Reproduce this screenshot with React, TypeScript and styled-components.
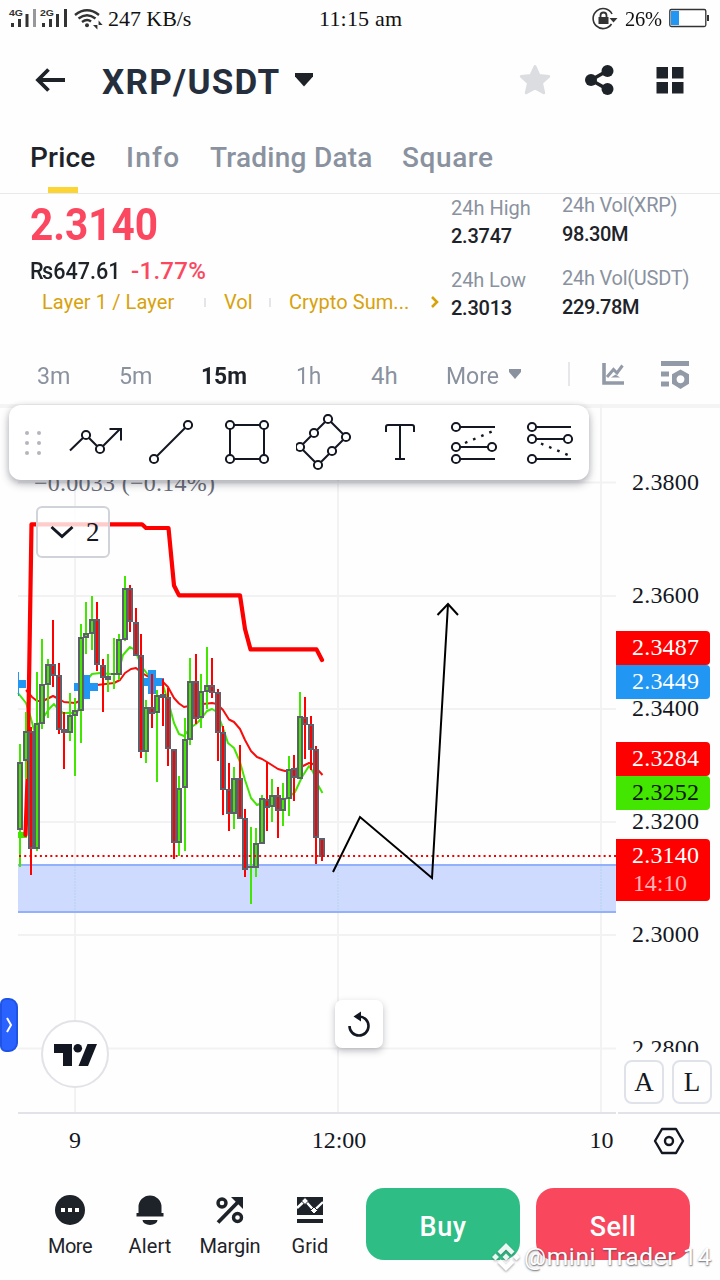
import React from "react";
import styled, { createGlobalStyle } from "styled-components";

const SANS = `Roboto, "Noto Sans", sans-serif`;
const SERIF = `"Liberation Serif", serif`;
const INK = "#1e2329";
const MUTED = "#8a929f";

const GlobalStyle = createGlobalStyle`
  * { box-sizing: border-box; }
  body { margin: 0; background: #fff; font-family: ${SANS}; color: ${INK}; }
`;

const Screen = styled.div`
  width: 720px;
  height: 1280px;
  overflow: hidden;
  background: #fefefe;
  display: flex;
  flex-direction: column;
  position: relative;
`;

/* A run of text with a fixed slot width so neighbours keep their place */
const Slot = styled.span<{ $w?: number; $ls?: number; $color?: string; $weight?: number; $squeeze?: number }>`
  display: inline-block;
  flex: none;
  width: ${(p) => (p.$w ? `${p.$w}px` : "auto")};
  letter-spacing: ${(p) => p.$ls ?? 0}px;
  color: ${(p) => p.$color ?? "inherit"};
  font-weight: ${(p) => p.$weight ?? "inherit"};
  transform: ${(p) => (p.$squeeze ? `scaleX(${p.$squeeze})` : "none")};
  transform-origin: 0 50%;
  white-space: nowrap;
`;

/* ---------- status bar ---------- */
const StatusBar = styled.div`
  height: 40px;
  flex: none;
  display: flex;
  align-items: flex-start;
  padding-left: 8px;
  font: 22px/38px ${SERIF};
  color: #111;
`;
const StatusIcons = styled.svg`
  flex: none;
  width: 100px;
  height: 40px;
`;
const LockIcon = styled.svg`
  flex: none;
  width: 33px;
  height: 40px;
`;
const BatteryIcon = styled.svg`
  flex: none;
  width: 48px;
  height: 40px;
`;

/* ---------- header ---------- */
const Header = styled.header`
  height: 80px;
  flex: none;
  display: flex;
  align-items: center;
  padding-left: 34px;
`;
const Title = styled.h1`
  margin: 0;
  width: 192px;
  padding-top: 5px;
  font-size: 35px;
  font-weight: 700;
  line-height: 75px;
  color: #252e3c;
  letter-spacing: 1.3px;
  white-space: nowrap;
`;
const BackArrow = styled.svg`
  width: 32px;
  height: 30px;
  margin-right: 36px;
`;
const Caret = styled.svg`
  width: 20px;
  height: 16px;
`;
const HeaderIcon = styled.svg<{ $left: number }>`
  width: 32px;
  height: 32px;
  flex: none;
  margin-left: ${(p) => p.$left}px;
`;

/* ---------- tabs ---------- */
const Tabs = styled.nav`
  height: 74px;
  flex: none;
  display: flex;
  padding-left: 30px;
  border-bottom: 1px solid #e8e9eb;
`;
const Tab = styled.div<{ $w: number; $ls: number; $active?: boolean }>`
  width: ${(p) => p.$w}px;
  height: 73px;
  font-size: 28px;
  font-weight: 500;
  line-height: 76px;
  letter-spacing: ${(p) => p.$ls}px;
  color: ${(p) => (p.$active ? INK : MUTED)};
  white-space: nowrap;
  display: flex;
  flex-direction: column;
  &::after {
    content: "";
    display: ${(p) => (p.$active ? "block" : "none")};
    width: 30px;
    height: 6px;
    margin: -9px 0 0 18px;
    background: #fcd535;
    flex: none;
  }
`;

/* ---------- ticker ---------- */
const Ticker = styled.section`
  height: 156px;
  flex: none;
  display: flex;
  padding-left: 30px;
`;
const PriceColumn = styled.div`
  width: 421px;
`;
const LastPrice = styled.div`
  font-size: 45px;
  font-weight: 700;
  line-height: 62px;
  height: 60px;
  color: #fb4860;
`;
const FiatRow = styled.div`
  display: flex;
  height: 32px;
  font-size: 24px;
  font-weight: 500;
  line-height: 34px;
`;
const TagRow = styled.div`
  display: flex;
  align-items: center;
  height: 32px;
  padding-left: 12px;
  font-size: 20px;
  line-height: 32px;
  color: #d8a20c;
`;
const TagDivider = styled.i<{ $after: number }>`
  width: 2px;
  height: 9px;
  background: #e4e5e8;
  margin-right: ${(p) => p.$after}px;
`;
const StatColumn = styled.div<{ $w: number; $lift?: number }>`
  width: ${(p) => p.$w}px;
  margin-top: ${(p) => -(p.$lift ?? 0)}px;
  display: flex;
  flex-direction: column;
  font-size: 20px;
  line-height: 28px;
`;
const Stat = styled.div<{ $gap?: number; $inner?: number }>`
  display: flex;
  flex-direction: column;
  gap: ${(p) => p.$inner ?? 0}px;
  margin-bottom: ${(p) => p.$gap ?? 0}px;
`;

/* ---------- intervals ---------- */
const Intervals = styled.div`
  height: 54px;
  flex: none;
  display: flex;
  padding-left: 37px;
  font-size: 24px;
  line-height: 52px;
  color: ${MUTED};
`;
const IntervalIcon = styled.svg<{ $w: number }>`
  width: ${(p) => p.$w}px;
  height: 50px;
  flex: none;
`;

/* ---------- chart ---------- */
const ChartArea = styled.section`
  height: 764px;
  flex: none;
  position: relative;
`;
const ChartSvg = styled.svg`
  display: block;
  width: 720px;
  height: 764px;
  font-family: ${SERIF};
  font-size: 24px;
`;
const DrawToolbar = styled.div`
  position: absolute;
  left: 9px;
  top: 1px;
  width: 580px;
  height: 75px;
  border-radius: 12px;
  background: #fff;
  box-shadow: 0 4px 8px rgba(40, 44, 60, 0.32), 0 1px 6px rgba(40, 44, 60, 0.12);
  display: flex;
  align-items: center;
`;
const DragHandle = styled.svg`
  width: 49px;
  height: 30px;
  flex: none;
`;
const ToolCell = styled.div`
  width: 76px;
  height: 75px;
  flex: none;
  display: flex;
  align-items: center;
  justify-content: center;
`;
const ToolIcon = styled.svg`
  width: 56px;
  height: 57px;
  fill: none;
  stroke: #131722;
  stroke-width: 2;
`;
const LegendToggle = styled.div`
  position: absolute;
  left: 36px;
  top: 102px;
  width: 74px;
  height: 52px;
  border: 2px solid #d1d3db;
  border-radius: 6px;
  background: rgba(255, 255, 255, 0.8);
  display: flex;
  align-items: center;
  gap: 12px;
  padding-left: 12px;
  font: 27px/46px ${SERIF};
  color: #131722;
`;
const PanelHandle = styled.div`
  position: absolute;
  left: 0;
  top: 594px;
  width: 18px;
  height: 54px;
  border-radius: 6px 9px 9px 6px;
  background: #2962ff;
  border: 2px solid #1e53e5;
  display: flex;
  align-items: center;
  justify-content: center;
`;
const ResetButton = styled.div`
  position: absolute;
  left: 335px;
  top: 596px;
  width: 48px;
  height: 48px;
  border-radius: 7px;
  background: #fff;
  box-shadow: 0 3px 7px rgba(40, 44, 60, 0.3);
  display: flex;
  align-items: center;
  justify-content: center;
`;
const BrandBadge = styled.div`
  position: absolute;
  left: 41px;
  top: 616px;
  width: 68px;
  height: 68px;
  padding-top: 2px;
  border-radius: 50%;
  border: 2px solid #e2e2e8;
  background: #fff;
  display: flex;
  align-items: center;
  justify-content: center;
`;
const ScaleButtons = styled.div`
  position: absolute;
  left: 618px;
  top: 648px;
  width: 102px;
  height: 60px;
  padding: 8px 0 0 6px;
  background: #fefefe;
  display: flex;
  gap: 8px;
`;
const ScaleButton = styled.div`
  width: 40px;
  height: 44px;
  border: 2px solid #e0e2e9;
  border-radius: 8px;
  text-align: center;
  font: 27px/40px ${SERIF};
  color: #131722;
`;

/* ---------- bottom bar ---------- */
const BottomBar = styled.footer`
  height: 112px;
  flex: none;
  display: flex;
  padding: 20px 0 0 30px;
`;
const NavItem = styled.div<{ $ls: number }>`
  width: 80px;
  display: flex;
  flex-direction: column;
  align-items: center;
  padding-top: 6px;
  font-size: 20px;
  line-height: 24px;
  letter-spacing: ${(p) => p.$ls}px;
  gap: 8px;
  white-space: nowrap;
`;
const NavIcon = styled.svg`
  width: 32px;
  height: 32px;
`;
const TradeButton = styled.div<{ $bg: string; $left: number }>`
  width: 154px;
  height: 72px;
  margin-left: ${(p) => p.$left}px;
  border-radius: 18px;
  background: ${(p) => p.$bg};
  color: #fff;
  font-size: 27px;
  font-weight: 500;
  line-height: 79px;
  letter-spacing: 0.5px;
  text-align: center;
`;
const Watermark = styled.div`
  position: absolute;
  left: 492px;
  top: 1241px;
  display: flex;
  align-items: center;
  height: 32px;
  color: #fff;
  font: 24.5px/32px ${SANS};
  text-shadow: 0 1px 2px rgba(70, 70, 80, 0.65), 1px 1px 1px rgba(90, 90, 100, 0.4);
`;
const WatermarkLogo = styled.svg`
  width: 28px;
  height: 30px;
  margin-right: 4px;
  opacity: 0.9;
  filter: drop-shadow(0 1px 1px rgba(70, 70, 80, 0.6));
`;

/* x centre, body top, body bottom, wick top, wick bottom, rising */
type Candle = [number, number, number, number, number, 0 | 1];
const CANDLES: Candle[] = [
  [20, 762, 830, 744, 867, 1],
  [26, 731, 761, 712, 779, 1],
  [31, 731, 849, 727, 875, 0],
  [37, 723, 849, 672, 851, 1],
  [42, 684, 724, 639, 729, 1],
  [48, 664, 685, 659, 718, 1],
  [53, 664, 676, 620, 687, 0],
  [59, 675, 730, 663, 734, 0],
  [64, 729, 733, 712, 769, 0],
  [70, 715, 733, 693, 741, 1],
  [75, 710, 716, 698, 776, 1],
  [81, 637, 711, 624, 743, 1],
  [86, 633, 638, 602, 654, 1],
  [92, 619, 634, 596, 650, 1],
  [97, 619, 665, 602, 671, 0],
  [103, 665, 678, 659, 712, 0],
  [108, 676, 680, 654, 692, 1],
  [114, 673, 675, 638, 689, 1],
  [119, 639, 675, 634, 680, 1],
  [125, 588, 640, 576, 641, 1],
  [130, 588, 622, 585, 632, 0],
  [136, 622, 656, 608, 656, 0],
  [141, 655, 752, 634, 758, 0],
  [146, 707, 752, 700, 763, 1],
  [152, 707, 714, 674, 728, 0],
  [157, 695, 713, 690, 782, 1],
  [163, 694, 698, 679, 726, 0],
  [168, 697, 749, 688, 766, 0],
  [174, 749, 843, 749, 859, 0],
  [179, 788, 843, 776, 856, 1],
  [185, 739, 788, 718, 851, 1],
  [190, 681, 740, 658, 745, 1],
  [196, 681, 719, 654, 724, 0],
  [201, 691, 718, 674, 728, 1],
  [207, 685, 692, 647, 709, 1],
  [212, 685, 693, 658, 698, 0],
  [218, 692, 733, 689, 761, 0],
  [223, 732, 790, 726, 815, 0],
  [229, 789, 814, 763, 831, 0],
  [234, 778, 814, 767, 829, 1],
  [240, 778, 819, 745, 819, 0],
  [245, 818, 870, 809, 877, 0],
  [251, 866, 868, 827, 904, 1],
  [256, 843, 868, 828, 877, 1],
  [262, 798, 844, 795, 844, 1],
  [267, 799, 808, 762, 831, 0],
  [272, 795, 807, 779, 822, 1],
  [278, 795, 811, 787, 838, 0],
  [283, 798, 811, 783, 826, 1],
  [289, 769, 799, 756, 816, 1],
  [294, 768, 778, 755, 801, 0],
  [300, 716, 779, 692, 779, 1],
  [305, 717, 725, 697, 759, 0],
  [311, 724, 750, 716, 770, 0],
  [316, 749, 838, 746, 864, 0],
  [322, 838, 857, 838, 861, 0],
];
const UP = "#42e600";
const DOWN = "#fe0000";

const STOP_LINE = "25.5,835 27.5,779 31.5,524.3 142,524.3 146,528 168.5,528 174,585.5 179,595.4 240,595.4 245,629 250.5,649.4 316.5,649.4 322,660";
const SLOW_MA = "26,690 32,697 37,701 43,701 53,696 59,699 64,702 75,703 82,700 87,692 92,687 97,685 114,683 120,680 125,673 131,669 136,668 142,673 152,679 163,682 168,687 174,698 179,703.5 184,707 189,706 203,704 212,703 217,704 223,710 229,719.5 234,722 240,729 245,740 251,751 257,757 262,759 267,762 278,769 285,771 294,770 303,766 309,763 313,764 317,769 322.5,775";
const FAST_MA = "18,693 26,703 30,715 34,730 43,718 49,709 54,704 57,708 63,713 77,713 82,700 87,680 92,674 100,673 110,674 118,674 123,655 130,647 135,650 142,667 152,680 163,685 170,708 174,723 179,734 184,736 190,728 196,724 201,719 207,711 212,709 217,712 223,728 228,743 234,748 240,762 245,780 251,798 257,805 262,803 270,800 283,800 289,797 295,792 302,777 309,766 313,772 318,785 322.5,793";

const GRID_Y = [482.5, 596, 709, 822, 935, 1048.5];
const GRID_X = [75, 338, 601];
const PRICES: [string, number][] = [
  ["2.3800", 490],
  ["2.3600", 603],
  ["2.3400", 716],
  ["2.3200", 829],
  ["2.3000", 942],
  ["2.2800", 1056],
];
const TAGS = [
  { text: "2.3487", y: 631, fill: DOWN, ink: "#fff" },
  { text: "2.3449", y: 665, fill: "#2196f3", ink: "#fff" },
  { text: "2.3284", y: 742, fill: DOWN, ink: "#fff" },
  { text: "2.3252", y: 776, fill: UP, ink: "#0c1400" },
];

const tagShape = (y: number, h: number) =>
  `M616 ${y}H706a4 4 0 0 1 4 4V${y + h - 4}a4 4 0 0 1 -4 4H616Z`;

function Chart() {
  return (
    <ChartSvg viewBox="0 404 720 764">
      <rect x="0" y="404" width="720" height="4" fill="#f4f4f5" />
      <g fill="#f2f2f3">
        {GRID_Y.map((y) => <rect key={y} x="18" y={y - 1} width="598" height="2" />)}
        {GRID_X.map((x) => <rect key={x} x={x - 1} y="404" width="2" height="708" />)}
      </g>
      <rect x="18" y="865" width="598" height="47" fill="#cedafe" />
      <path d="M18 865H616M18 912H616" stroke="#93b0fc" strokeWidth="2" />
      <path d="M75 866V911M338 866V911M601 866V911" stroke="#c1d8f5" strokeWidth="2" strokeDasharray="2 1" />

      <rect x="18" y="832" width="9" height="6" fill={UP} />
      <g fill="none" strokeLinejoin="round">
        <polyline points={FAST_MA} stroke={UP} strokeWidth="2" />
        <polyline points={SLOW_MA} stroke="#f80d0d" strokeWidth="2" />
        <polyline points={STOP_LINE} stroke={DOWN} strokeWidth="4.2" strokeLinecap="round" />
      </g>
      <path d="M18 672h1v8h7v8h-7v8h-1ZM74 683h8v-8h8v8h8v8h-8v8h-8v-8h-8ZM140 678h8v-8h8v8h8v8h-8v8h-8v-8h-8Z" fill="#2196f3" />

      <g shapeRendering="crispEdges">
        {CANDLES.map(([x, top, bottom, high, low, up]) => {
          const color = up ? UP : DOWN;
          return (
            <g key={x}>
              <rect x={x - 1} y={high} width="2" height={low - high} fill={color} />
              <rect x={x - 3} y={top} width="6" height={bottom - top} fill="#5d606b" />
              {bottom - top > 4 && (
                <rect x={x - 1} y={top + 2} width="2" height={bottom - top - 4} fill={color} />
              )}
            </g>
          );
        })}
      </g>
      <path d="M19 856H616" stroke="#f00000" strokeWidth="2" strokeDasharray="2 3.22" />
      <g fill="none" stroke="#000" strokeWidth="2">
        <path d="M333 872L360 817L432 878L448 604" />
        <path d="M437.5 615L448 604L458 615" />
      </g>

      <text x="34" y="490.5" textLength="181" fill="#6a6d78">−0.0033 (−0.14%)</text>

      <g fill="#131722">
        {PRICES.map(([label, y]) => (
          <text key={label} x="632" y={y} textLength="67">{label}</text>
        ))}
      </g>
      {TAGS.map((t) => (
        <g key={t.text}>
          <path d={tagShape(t.y, 34)} fill={t.fill} />
          <text x="632" y={t.y + 24} textLength="67" fill={t.ink}>{t.text}</text>
        </g>
      ))}
      <path d={tagShape(839, 62)} fill={DOWN} />
      <text x="632" y="863" textLength="67" fill="#fff">2.3140</text>
      <text x="633" y="891" textLength="54" fill="#ffb3b3">14:10</text>

      <path d="M18 1113H616M618 1113H720" stroke="#e2e3e9" strokeWidth="2" />
      <g fill="#131722" textAnchor="middle">
        <text x="75" y="1148">9</text>
        <text x="339" y="1148">12:00</text>
        <text x="601.5" y="1148">10</text>
      </g>
      <g fill="none" stroke="#131722" strokeWidth="2.4">
        <path d="M662 1129H676L683 1141L676 1153H662L655 1141Z" strokeLinejoin="round" />
        <circle cx="669" cy="1141" r="4" />
      </g>
    </ChartSvg>
  );
}

const Nodes = ({ at }: { at: [number, number][] }) => (
  <g fill="#fff">
    {at.map(([x, y]) => <circle key={`${x},${y}`} cx={x} cy={y} r="4.1" />)}
  </g>
);

const TOOLS: React.ReactNode[] = [
  <>
    <path d="M-26 8.5L-10 -7L4 7L24 -13M13.5 -13H25V-1.5" />
    <Nodes at={[[-10, -7], [4, 7]]} />
  </>,
  <>
    <path d="M-18 17L16 -17" />
    <Nodes at={[[-18, 17], [16, -17]]} />
  </>,
  <>
    <path d="M-18 -17H16V17H-18Z" />
    <Nodes at={[[-18, -17], [16, -17], [16, 17], [-18, 17]]} />
  </>,
  <>
    <path d="M4 -23L-24 5L-6 23L22 -5Z" />
    <Nodes at={[[4, -23], [-10, -9], [-24, 5], [-6, 23], [8, 9], [22, -5]]} />
  </>,
  <path d="M-14 -10V-15Q-14 -17 -12 -17H12Q14 -17 14 -15V-10M0 -17V17M-5 17H5" />,
  <>
    <path d="M-20 -15H19M-20 5H16M-20 17H19" />
    <path d="M-11 1L17 -11" strokeDasharray="2.6 6.2" strokeWidth="2.4" />
    <Nodes at={[[-20, -15], [-20, 5], [-20, 17], [16, 5]]} />
  </>,
  <>
    <path d="M-20 -15H19M-20 -3H16M-20 17H19" />
    <path d="M-11 1.5L17 13.5" strokeDasharray="2.6 6.2" strokeWidth="2.4" />
    <Nodes at={[[-20, -15], [-20, -3], [-20, 17], [16, -3]]} />
  </>,
];

export default function App() {
  return (
    <>
      <GlobalStyle />
      <Screen>
        <StatusBar>
          <StatusIcons viewBox="8 0 100 40">
            <g fontFamily="Liberation Sans, sans-serif" fontWeight="700" fontSize="9.5" fill="#333">
              <text x="9" y="16" textLength="14" lengthAdjust="spacingAndGlyphs">4G</text>
              <text x="40" y="16" textLength="14" lengthAdjust="spacingAndGlyphs">2G</text>
            </g>
            <g fill="#333">
              <path d="M11 23h3v4h-3zM18 19h3v8h-3zM25.500 14h3v13h-3z" />
              <path d="M33 9h3v18h-3z" fill="#98989c" />
              <path d="M42 23h3v4h-3zM49 19h3v8h-3zM56 14h3v13h-3zM64 9h3v18h-3z" />
            </g>
            <g fill="none" stroke="#333" strokeWidth="2.4">
              <path d="M75 15Q87 5.500 99 15" />
              <path d="M78.500 18.500Q87 12 95.500 18.500" />
              <path d="M82 22Q87 18.200 91 21.500" />
            </g>
            <circle cx="87" cy="25.200" r="2" fill="#333" />
            <path d="M97.400 20.500V29.500L93 25H97.400M98.600 29.500V20.500L102.600 25H98.600" fill="#333" />
          </StatusIcons>
          <Slot $w={211} $ls={-0.05}>247 KB/s</Slot>
          <Slot $w={273} $ls={0.2}>11:15 am</Slot>
          <LockIcon viewBox="592 0 33 40">
            <path d="M612 14A10 10 0 1 0 611.500 24" fill="none" stroke="#333" strokeWidth="1.6" />
            <path d="M598.500 17h10v7h-10z" fill="#333" />
            <path d="M600.500 17v-1.500a3 3 0 0 1 6 0V17" fill="none" stroke="#333" strokeWidth="1.800" />
            <path d="M609.500 18h8l-4 4.500z" fill="#333" />
          </LockIcon>
          <Slot $w={42} $squeeze={0.93} $ls={-0.3}>26%</Slot>
          <BatteryIcon viewBox="667 0 48 40">
            <rect x="669.800" y="9.500" width="36" height="17" rx="1.500" fill="#fff" stroke="#333" strokeWidth="1.300" />
            <rect x="671" y="11" width="8" height="14" fill="#2196f3" />
            <rect x="707" y="15" width="2" height="6" fill="#333" />
          </BatteryIcon>
        </StatusBar>

        <Header>
          <BackArrow viewBox="34 65 32 30" fill="none" stroke={INK} strokeWidth="3.800">
            <path d="M65 80H37.500M48.500 69.500L38 80L48.500 90.500" />
          </BackArrow>
          <Title>XRP/USDT</Title>
          <Caret viewBox="294 72 20 16">
            <path d="M295 73h18v3.500l-9 10l-9-10z" fill={INK} />
          </Caret>
          <HeaderIcon $left={205} viewBox="519 64 32 32">
            <path d="M535 66.500l4.100 9 9.600 1-7.200 6.500 2.200 9.800-8.700-4.900-8.700 4.900 2.200-9.800-7.200-6.500 9.600-1z" fill="#dcdde1" stroke="#dcdde1" strokeWidth="3" strokeLinejoin="round" />
          </HeaderIcon>
          <HeaderIcon $left={32} viewBox="583 64 32 32">
            <path d="M607 71L591 80L607 89" fill="none" stroke={INK} strokeWidth="3.500" />
            <g fill={INK}>
              <circle cx="607.500" cy="71" r="6" />
              <circle cx="591" cy="80" r="6" />
              <circle cx="607.500" cy="89" r="6" />
            </g>
          </HeaderIcon>
          <HeaderIcon $left={39} viewBox="654 64 32 32">
            <path d="M656.500 67h11.500v11.500h-11.500zM672 67h11.500v11.500h-11.500zM656.500 82h11.500v11.500h-11.500zM672 82h11.500v11.500h-11.500z" fill={INK} />
          </HeaderIcon>
        </Header>

        <Tabs>
          <Tab $w={96} $ls={0.2} $active>Price</Tab>
          <Tab $w={84} $ls={1.3}>Info</Tab>
          <Tab $w={192} $ls={0.25}>Trading Data</Tab>
          <Tab $w={120} $ls={0.6}>Square</Tab>
        </Tabs>

        <Ticker>
          <PriceColumn>
            <LastPrice><Slot $squeeze={0.9}>2.3140</Slot></LastPrice>
            <FiatRow>
              <Slot $w={101} $squeeze={0.9}>₨647.61</Slot>
              <Slot $color="#fb4860" $ls={0.3}>-1.77%</Slot>
            </FiatRow>
            <TagRow>
              <Slot $w={162} $ls={0.1}>Layer 1 / Layer</Slot>
              <TagDivider $after={18} />
              <Slot $w={45}>Vol</Slot>
              <TagDivider $after={18} />
              <Slot $w={142} $ls={0.05}>Crypto Sum...</Slot>
              <svg width="10" height="14" viewBox="0 0 10 14" fill="none" stroke="#d8a20c" strokeWidth="2.600">
                <path d="M1 2L6 7L1 12" />
              </svg>
            </TagRow>
          </PriceColumn>
          <StatColumn $w={111}>
            <Stat $gap={16}>
              <Slot $color={MUTED}>24h High</Slot>
              <Slot $weight={500} $ls={-0.25}>2.3747</Slot>
            </Stat>
            <Stat>
              <Slot $color={MUTED} $ls={-0.1}>24h Low</Slot>
              <Slot $weight={500} $ls={-0.25}>2.3013</Slot>
            </Stat>
          </StatColumn>
          <StatColumn $w={150} $lift={3}>
            <Stat $gap={16} $inner={1}>
              <Slot $color={MUTED} $ls={-0.25}>24h Vol(XRP)</Slot>
              <Slot $weight={500} $ls={-0.4}>98.30M</Slot>
            </Stat>
            <Stat $inner={1}>
              <Slot $color={MUTED} $ls={-0.25}>24h Vol(USDT)</Slot>
              <Slot $weight={500} $ls={-0.4}>229.78M</Slot>
            </Stat>
          </StatColumn>
        </Ticker>

        <Intervals>
          <Slot $w={82} $squeeze={0.97}>3m</Slot>
          <Slot $w={82} $squeeze={0.97}>5m</Slot>
          <Slot $w={95} $squeeze={0.95} $weight={700} $color={INK}>15m</Slot>
          <Slot $w={75} $squeeze={0.95}>1h</Slot>
          <Slot $w={75}>4h</Slot>
          <Slot $w={60} $squeeze={0.96}>More</Slot>
          <IntervalIcon $w={214} viewBox="506 350 214 50">
            <path d="M509 369h12v3l-6 7l-6-7z" fill={MUTED} />
            <rect x="568" y="362" width="2" height="24" fill="#e6e7ea" />
            <g fill="none" stroke="#939aa7" strokeWidth="3.600">
              <path d="M604 363V383H624" />
              <path d="M607 377L613.500 369.500L617 373L622.500 365.500" strokeWidth="3" />
              <path d="M661 363.500H689" strokeWidth="5" />
              <path d="M661 374H669M661 384H669" strokeWidth="5" />
            </g>
            <path d="M611 377.500l4.500-3 4.500 3z" fill="#939aa7" />
            <path fillRule="evenodd" d="M680.500 369.500l8.500 4.800v9.400l-8.500 5.300-8.500-5.300v-9.400zM680.500 375.300a4 4 0 1 0 .01 0z" fill="#939aa7" />
          </IntervalIcon>
        </Intervals>

        <ChartArea>
          <Chart />
          <DrawToolbar>
            <DragHandle viewBox="9 427 49 30" fill="#b4b6be">
              {[27, 39].map((x) => [432, 442, 452].map((y) => <circle key={`${x}${y}`} cx={x} cy={y} r="2" />))}
            </DragHandle>
            {TOOLS.map((icon, i) => (
              <ToolCell key={i}>
                <ToolIcon viewBox="-28 -28 56 57">{icon}</ToolIcon>
              </ToolCell>
            ))}
          </DrawToolbar>
          <LegendToggle>
            <svg width="24" height="16" viewBox="0 0 24 16" fill="none" stroke="#131722" strokeWidth="3">
              <path d="M1.500 3L12 12.500L22.500 3" />
            </svg>
            2
          </LegendToggle>
          <PanelHandle>
            <svg width="8" height="18" viewBox="0 0 8 18" fill="none" stroke="#fff" strokeWidth="2">
              <path d="M2 2L6 9L2 16" />
            </svg>
          </PanelHandle>
          <BrandBadge>
            <svg width="44" height="24" viewBox="53 1043 44 24" fill="#131722">
              <path d="M54 1044H72V1066H63V1053H54Z" />
              <circle cx="77.800" cy="1048.300" r="4.300" />
              <path d="M87.500 1044H97L88 1066H78.500Z" />
            </svg>
          </BrandBadge>
          <ResetButton>
            <svg width="26" height="28" viewBox="346 1010 26 28">
              <path d="M349.500 1026A9.500 9.500 0 1 0 359 1016.500" fill="none" stroke="#131722" strokeWidth="2.600" />
              <path d="M361 1011.500V1021.500L353.500 1016.500Z" fill="#131722" />
            </svg>
          </ResetButton>
          <ScaleButtons>
            <ScaleButton>A</ScaleButton>
            <ScaleButton>L</ScaleButton>
          </ScaleButtons>
        </ChartArea>

        <BottomBar>
          <NavItem $ls={-0.5}>
            <NavIcon viewBox="0 0 32 32">
              <circle cx="16" cy="16" r="15" fill={INK} />
              <path d="M7 14h4v4H7zM14 14h4v4h-4zM21 14h4v4h-4z" fill="#fff" />
            </NavIcon>
            More
          </NavItem>
          <NavItem $ls={0.1}>
            <NavIcon viewBox="0 0 32 32" fill={INK}>
              <path d="M4.500 13a11.500 11.500 0 0 1 23 0v6l2 0v3.500h-27v-3.500h2zM8.500 26h15a7.500 5 0 0 1-15 0z" />
            </NavIcon>
            Alert
          </NavItem>
          <NavItem $ls={-0.2}>
            <NavIcon viewBox="0 0 32 32" fill="none" stroke={INK}>
              <circle cx="8" cy="9" r="4" strokeWidth="3.400" />
              <circle cx="23.500" cy="23.500" r="4" strokeWidth="3.400" />
              <path d="M4 28.500L26 6" strokeWidth="3.800" />
              <path d="M17 3H29V15Z" fill={INK} stroke="none" />
            </NavIcon>
            Margin
          </NavItem>
          <NavItem $ls={0.1}>
            <NavIcon viewBox="0 0 32 32">
              <path d="M3 3H29V21H3ZM3 25H29V29H3Z" fill={INK} />
              <path d="M3 14L11 6.500L20 16.500L29 8" fill="none" stroke="#fff" strokeWidth="2.400" />
              <path d="M11 3.500l3.500 3.500-3.500 3.500-3.500-3.500zM20 13l3.500 3.500-3.500 3.500-3.500-3.500z" fill="#fff" stroke={INK} strokeWidth="1" />
            </NavIcon>
            Grid
          </NavItem>
          <TradeButton $bg="#2ebd85" $left={16}>Buy</TradeButton>
          <TradeButton $bg="#f9475e" $left={16}>Sell</TradeButton>
        </BottomBar>

        <Watermark>
          <WatermarkLogo viewBox="0 0 28 30" fill="#fff">
            <path d="M14 1L22.500 9.500L19.300 12.700L14 7.400L8.700 12.700L5.500 9.500Z" />
            <path d="M14 11.500L17.500 15L14 18.500L10.500 15Z" />
            <path d="M3.500 11.500L7 15L3.500 18.500L0 15ZM24.500 11.500L28 15L24.500 18.500L21 15Z" />
            <path d="M14 29L22.500 20.500L19.300 17.300L14 22.600L8.700 17.300L5.500 20.500Z" />
          </WatermarkLogo>
          <Slot $ls={0.65}>@mini Trader 14</Slot>
        </Watermark>
      </Screen>
    </>
  );
}
